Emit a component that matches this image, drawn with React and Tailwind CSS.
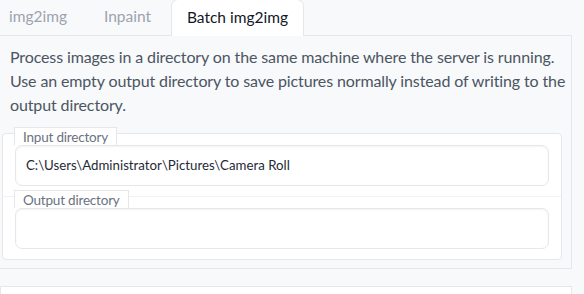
import React from "react";

const font = { fontFamily: "Lato, 'Noto Sans', sans-serif" };

function DirField({ label, value }) {
  return (
    <div className="relative pt-[11px] px-[12px] pb-[10px]">
      <span className="absolute left-[11px] top-[-7px] h-[18px] px-[8px] bg-white border border-b-0 border-[#e5e7eb] text-[13.5px] tracking-[-0.2px] leading-[18px] text-[#6b7280]">
        {label}
      </span>
      <div className="h-[41px] rounded-[7px] border border-[#e5e7eb] bg-white shadow-[inset_0_1px_2px_rgba(0,0,0,0.05)] flex items-center px-[10px] text-[13.25px] text-[#1f2937]">
        {value}
      </div>
    </div>
  );
}

export default function App() {
  return (
    <div className="w-[584px] h-[294px] bg-[#f8f9fa] overflow-hidden" style={font}>
      {/* tabs */}
      <div className="flex h-[36px] items-end border-b border-[#e5e7eb] w-[572px]">
        <div className="w-[104px] h-[36px] flex items-center pl-[9px] text-[15.5px] text-[#9ca3af]">img2img</div>
        <div className="w-[67px] h-[36px] flex items-center text-[15.5px] text-[#9ca3af]">Inpaint</div>
        <div className="w-[133px] h-[37px] -mb-px flex items-center justify-center bg-white border border-b-0 border-[#e5e7eb] rounded-t-[7px] text-[15.5px] text-[#111827]">
          Batch img2img
        </div>
      </div>

      {/* panel */}
      <div className="w-[572px] border-r border-b border-[#e5e7eb] pt-[9px] pb-[8px]">
        <p className="pl-[10px] text-[16px] tracking-[-0.12px] leading-[24px] text-[#4b5563]">
          Process images in a directory on the same machine where the server is running. Use an empty output directory to save pictures normally instead of writing to the output directory.
        </p>
        <div className="mt-[16px] ml-[2px] w-[560px] bg-white border border-[#e5e7eb] rounded-[4px]">
          <DirField label="Input directory" value="C:\Users\Administrator\Pictures\Camera Roll" />
          <div className="border-t border-[#f1f2f4]" />
          <DirField label="Output directory" value="" />
        </div>
      </div>

      <div className="mt-[17px] w-[572px] h-[20px] bg-white border border-[#e5e7eb]" />
    </div>
  );
}
